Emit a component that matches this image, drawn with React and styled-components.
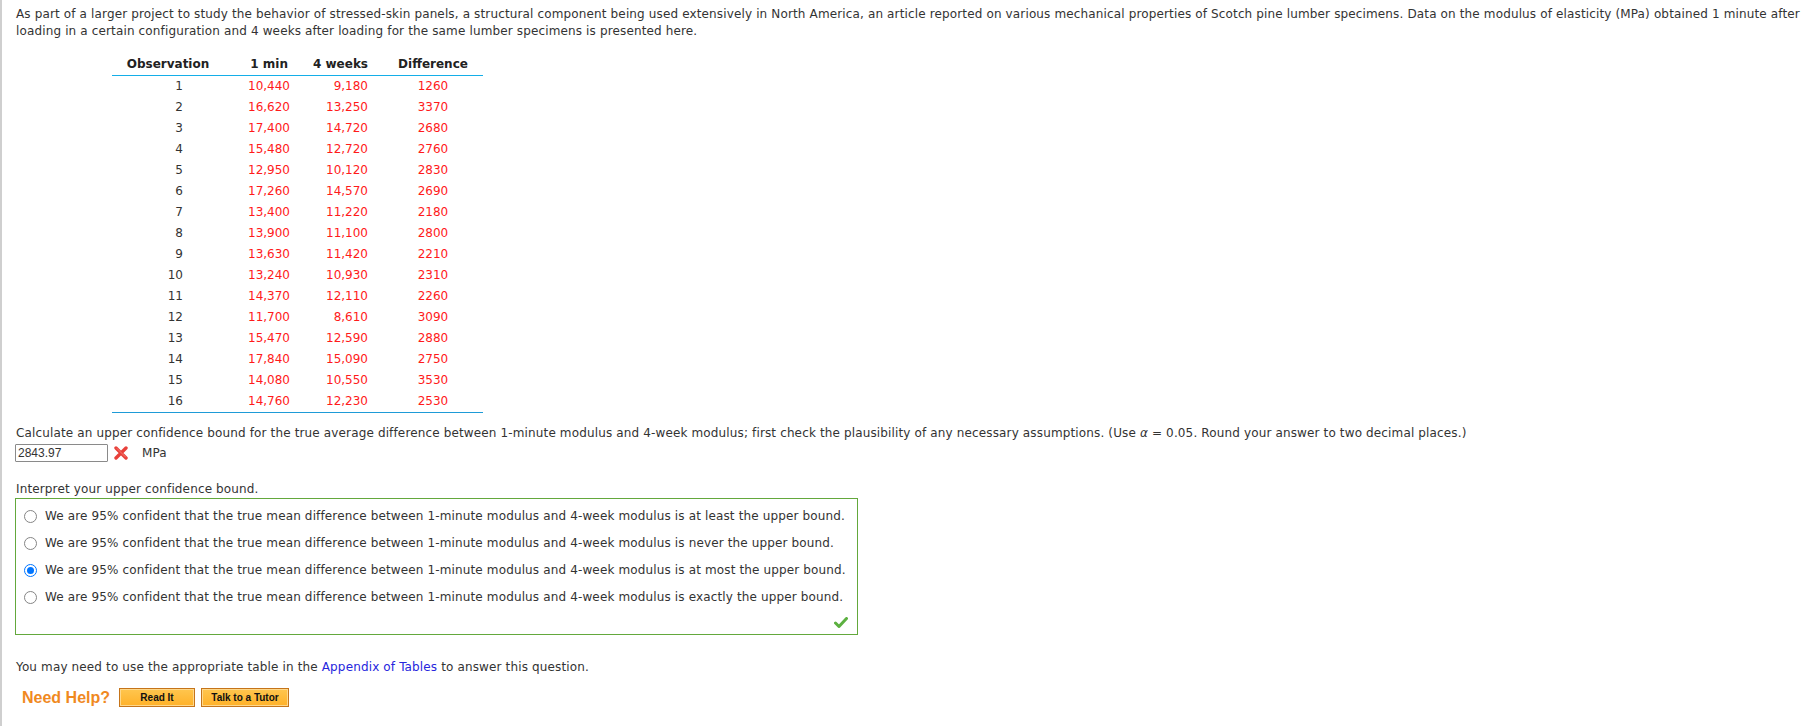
import React from "react";
import styled, { createGlobalStyle } from "styled-components";

const GlobalStyle = createGlobalStyle`
  html, body {
    margin: 0;
    padding: 0;
    background: #ffffff;
  }
  body {
    font-family: "DejaVu Sans", Verdana, sans-serif;
    font-size: 12px;
    color: #333333;
  }
`;

const Page = styled.div`
  min-height: 726px;
  box-sizing: border-box;
  border-left: 2px solid #cfcfcf;
  padding: 6px 0 0 14px;
  line-height: 17px;
`;

const Question = styled.p`
  margin: 0;
  padding-right: 4px;
  letter-spacing: 0.14px;
`;

const Table = styled.div`
  margin: 13px 0 0 96px;
  width: 371px;
`;

const Row = styled.div`
  display: grid;
  grid-template-columns: 112px 68px 91px 100px;
  height: ${(p) => p.$h || 21}px;
  align-items: center;
  border-bottom: ${(p) => (p.$line ? `1px solid ${p.$line}` : "none")};
`;

const HeadCell = styled.div`
  font-weight: bold;
  color: #222;
  text-align: ${(p) => p.$align || "center"};
  padding-right: ${(p) => p.$pad || 0}px;
`;

const Cell = styled.div`
  color: ${(p) => (p.$red ? "#ff1a1a" : "#333")};
  text-align: ${(p) => p.$align || "center"};
  padding-right: ${(p) => p.$pad || 0}px;
`;

const Prompt = styled.div`
  margin-top: ${(p) => p.$top || 0}px;
  letter-spacing: 0.14px;
`;

const AnswerRow = styled.div`
  display: flex;
  align-items: center;
  margin: 2px 0 0 -1px;
  height: 18px;
`;

const AnswerInput = styled.div`
  box-sizing: border-box;
  width: 93px;
  height: 18px;
  border: 1px solid #8a8a8a;
  border-radius: 1px;
  font-family: "Liberation Sans", Arial, sans-serif;
  font-size: 12px;
  line-height: 16px;
  padding-left: 2px;
  color: #333;
`;

const Unit = styled.span`
  margin-left: 13px;
  letter-spacing: 0.14px;
`;

const ChoiceBox = styled.div`
  position: relative;
  box-sizing: border-box;
  width: 843px;
  margin-left: -1px;
  border: 1px solid #63a83c;
  padding: 4px 0 23px 0;
`;

const Choice = styled.label`
  display: flex;
  align-items: center;
  height: 27px;
  padding-left: 8px;
  letter-spacing: 0.14px;
`;

const Radio = styled.span`
  box-sizing: border-box;
  width: 13px;
  height: 13px;
  border-radius: 50%;
  border: 1px solid ${(p) => (p.$on ? "#0075ff" : "#858585")};
  margin-right: 8px;
  display: flex;
  align-items: center;
  justify-content: center;
  flex-shrink: 0;
  &::after {
    content: "";
    display: ${(p) => (p.$on ? "block" : "none")};
    width: 7px;
    height: 7px;
    border-radius: 50%;
    background: #0075ff;
  }
`;

const CheckMark = styled.svg`
  position: absolute;
  right: 9px;
  bottom: 6px;
`;

const Link = styled.a`
  color: #2626dd;
  text-decoration: none;
`;

const HelpRow = styled.div`
  display: flex;
  align-items: center;
  margin-top: 12px;
  padding-left: 6px;
  height: 19px;
`;

const HelpLabel = styled.span`
  font-family: "Liberation Sans", Arial, sans-serif;
  font-weight: bold;
  font-size: 16px;
  color: #f0891f;
  margin-right: 9px;
`;

const HelpButton = styled.button`
  box-sizing: border-box;
  height: 19px;
  width: ${(p) => p.$w}px;
  margin-right: 6px;
  padding: 0;
  border: 1px solid #c5741a;
  box-shadow: inset 0 0 0 1px #ffd88a;
  background: linear-gradient(#ffc64f, #ffb128);
  font-family: "Liberation Sans", Arial, sans-serif;
  font-weight: bold;
  font-size: 10px;
  color: #111;
`;

const rows = [
  [1, "10,440", "9,180", 1260],
  [2, "16,620", "13,250", 3370],
  [3, "17,400", "14,720", 2680],
  [4, "15,480", "12,720", 2760],
  [5, "12,950", "10,120", 2830],
  [6, "17,260", "14,570", 2690],
  [7, "13,400", "11,220", 2180],
  [8, "13,900", "11,100", 2800],
  [9, "13,630", "11,420", 2210],
  [10, "13,240", "10,930", 2310],
  [11, "14,370", "12,110", 2260],
  [12, "11,700", "8,610", 3090],
  [13, "15,470", "12,590", 2880],
  [14, "17,840", "15,090", 2750],
  [15, "14,080", "10,550", 3530],
  [16, "14,760", "12,230", 2530],
];

const choices = [
  "at least the upper bound.",
  "never the upper bound.",
  "at most the upper bound.",
  "exactly the upper bound.",
];

function WrongIcon() {
  return (
    <svg width="16" height="14" viewBox="0 0 16 14" style={{ marginLeft: 5 }}>
      <path d="M3 2 L13 12 M13 2 L3 12" stroke="#e8403a" strokeWidth="3.4" strokeLinecap="round" />
      <path d="M4 2.5 L12.5 11" stroke="#f77a70" strokeWidth="1" strokeLinecap="round" />
    </svg>
  );
}

export default function App() {
  return (
    <>
      <GlobalStyle />
      <Page>
        <Question>
          As part of a larger project to study the behavior of stressed-skin panels, a structural component being used extensively in North America, an article reported on various mechanical properties of Scotch pine lumber specimens. Data on the modulus of elasticity (MPa) obtained 1 minute after loading in a certain configuration and 4 weeks after loading for the same lumber specimens is presented here.
        </Question>

        <Table>
          <Row $h={22} $line="#14aee8">
            <HeadCell>Observation</HeadCell>
            <HeadCell $align="right" $pad={4}>1 min</HeadCell>
            <HeadCell $align="right" $pad={15}>4 weeks</HeadCell>
            <HeadCell>Difference</HeadCell>
          </Row>
          {rows.map((r, i) => (
            <Row key={r[0]} $line={i === rows.length - 1 ? "#1e9bd7" : null}>
              <Cell $align="right" $pad={41}>{r[0]}</Cell>
              <Cell $red $align="right" $pad={2}>{r[1]}</Cell>
              <Cell $red $align="right" $pad={15}>{r[2]}</Cell>
              <Cell $red>{r[3]}</Cell>
            </Row>
          ))}
        </Table>

        <Prompt $top={12}>
          Calculate an upper confidence bound for the true average difference between 1-minute modulus and 4-week modulus; first check the plausibility of any necessary assumptions. (Use <i>α</i> = 0.05. Round your answer to two decimal places.)
        </Prompt>
        <AnswerRow>
          <AnswerInput>2843.97</AnswerInput>
          <WrongIcon />
          <Unit>MPa</Unit>
        </AnswerRow>

        <Prompt $top={19}>Interpret your upper confidence bound.</Prompt>
        <ChoiceBox>
          {choices.map((c, i) => (
            <Choice key={c}>
              <Radio $on={i === 2} />
              We are 95% confident that the true mean difference between 1-minute modulus and 4-week modulus is {c}
            </Choice>
          ))}
          <CheckMark width="14" height="11" viewBox="0 0 14 11">
            <path d="M1.5 6 L5 9.5 L12.5 1.5" fill="none" stroke="#5cb040" strokeWidth="3" strokeLinejoin="round" strokeLinecap="round" />
          </CheckMark>
        </ChoiceBox>

        <Prompt $top={24}>
          You may need to use the appropriate table in the <Link href="#">Appendix of Tables</Link> to answer this question.
        </Prompt>
        <HelpRow>
          <HelpLabel>Need Help?</HelpLabel>
          <HelpButton $w={76}>Read It</HelpButton>
          <HelpButton $w={88}>Talk to a Tutor</HelpButton>
        </HelpRow>
      </Page>
    </>
  );
}
